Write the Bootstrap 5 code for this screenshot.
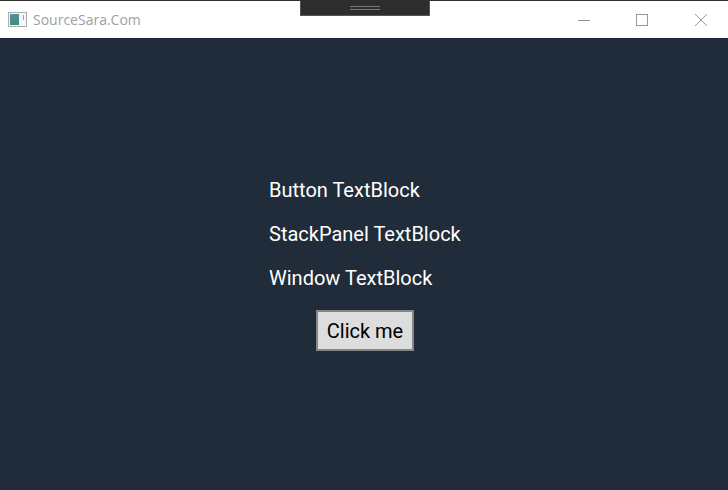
<!DOCTYPE html>
<html lang="en">
<head>
<meta charset="utf-8">
<title>SourceSara.Com</title>
<link href="https://cdn.jsdelivr.net/npm/bootstrap@5.3.0/dist/css/bootstrap.min.css" rel="stylesheet">
<style>
html, body { height: 490px; overflow: hidden; }
body { background: #202c39; font-family: Roboto, sans-serif; position: relative; }
.win-bar { height: 38px; background: #fff; border-top: 1px solid #2e2e2e; }
.win-title { font-family: "Open Sans", sans-serif; font-size: 14px; color: #a0a0a0; line-height: 1; }
.win-ico { margin-left: 8px; margin-right: 6px; }
.win-btn { height: 37px; }
.win-min { width: 52px; }
.win-max { width: 64px; }
.win-close { width: 54px; }
.dbg-bar { position: absolute; left: 300px; top: 0; width: 130px; height: 16px; background: #2d2d2d; border: 1px solid #555; border-top-color: #2e2e2e; }
.dbg-grip { width: 30px; height: 4px; border-top: 1px solid #777; border-bottom: 1px solid #777; }
.stage { height: 452px; padding-top: 140px; }
.stack { width: 192px; margin-left: 2px; }
.stack-line { font-size: 20px; line-height: 24px; color: #fff; margin-bottom: 20px; white-space: nowrap; }
.stack-btn { width: 98px; height: 41px; background: #ddd; border: 2px solid #868686; border-radius: 0; color: #000; font-size: 20px; line-height: 1; padding: 0; }
.stack-btn:hover { background: #ddd; color: #000; border-color: #868686; }
</style>
</head>
<body>
<div class="win-bar d-flex align-items-center">
  <svg class="win-ico" width="19" height="15" viewBox="0 0 19 15">
    <defs><linearGradient id="icoFill" x1="0" y1="0" x2="0" y2="1"><stop offset="0" stop-color="#5b8aa6"/><stop offset="1" stop-color="#3f9070"/></linearGradient></defs>
    <rect x=".5" y=".5" width="18" height="14" fill="#f6f6f6" stroke="#aeaeae"/>
    <rect x="2" y="2" width="9" height="11" fill="url(#icoFill)"/>
    <rect x="15" y="3" width="1" height="5" fill="#7fb0b0"/>
  </svg>
  <span class="win-title">SourceSara.Com</span>
  <div class="d-flex ms-auto">
    <div class="win-btn win-min d-flex align-items-center justify-content-center">
      <svg width="12" height="12" viewBox="0 0 12 12"><path d="M0 6.5H12" stroke="#999" fill="none"/></svg>
    </div>
    <div class="win-btn win-max d-flex align-items-center justify-content-center">
      <svg width="12" height="12" viewBox="0 0 12 12"><rect x=".5" y=".5" width="11" height="11" stroke="#999" fill="none"/></svg>
    </div>
    <div class="win-btn win-close d-flex align-items-center justify-content-center">
      <svg width="12" height="12" viewBox="0 0 12 12"><path d="M0 0L12 12M12 0L0 12" stroke="#999" fill="none"/></svg>
    </div>
  </div>
</div>
<div class="dbg-bar d-flex align-items-center justify-content-center"><div class="dbg-grip"></div></div>
<main class="stage d-flex justify-content-center">
  <div class="stack d-flex flex-column align-items-center">
    <div class="stack-line w-100">Button TextBlock</div>
    <div class="stack-line w-100">StackPanel TextBlock</div>
    <div class="stack-line w-100">Window TextBlock</div>
    <button type="button" class="btn stack-btn">Click me</button>
  </div>
</main>
<script src="https://cdn.jsdelivr.net/npm/bootstrap@5.3.0/dist/js/bootstrap.bundle.min.js"></script>
</body>
</html>
